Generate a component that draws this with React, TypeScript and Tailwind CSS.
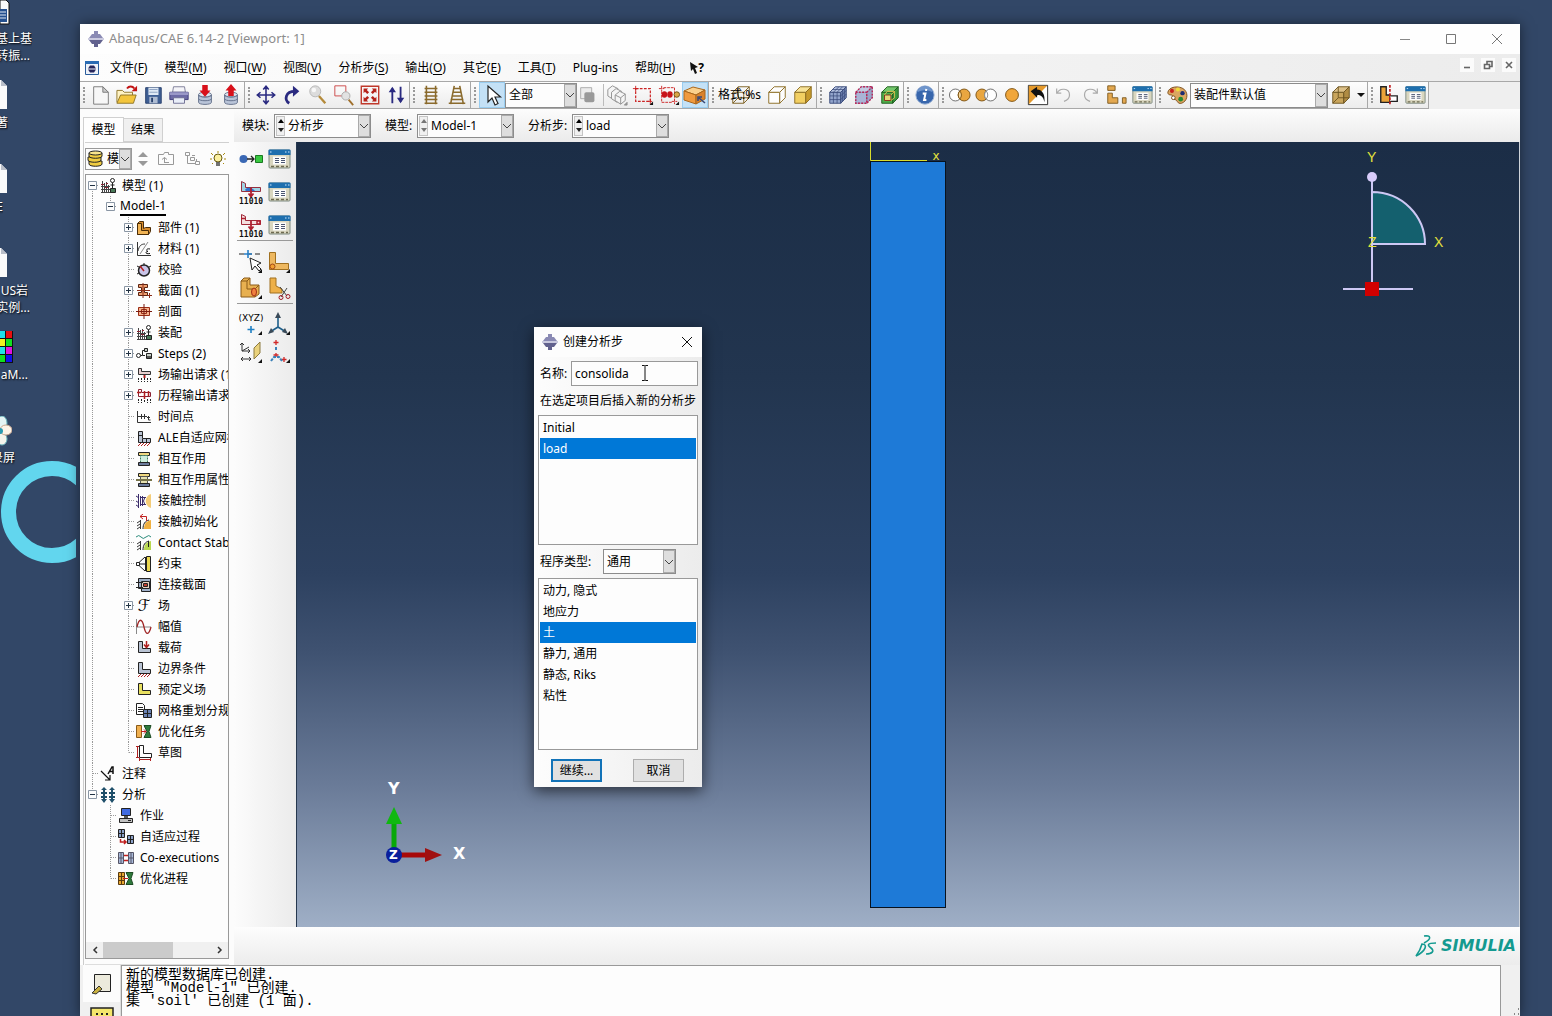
import React, { useState } from "react";

type Kids = { children?: React.ReactNode };

const Ico = ({ children, size = "size-6", box = "0 0 24 24" }: Kids & { size?: string; box?: string }) => (
  <svg viewBox={box} className={`${size} shrink-0`} fill="none" aria-hidden="true">
    {children}
  </svg>
);

const Corner = () => <path d="M23 19v4h-4z" fill="#111" />;

const Manager = () => (
  <>
    <rect x="2" y="3" width="21" height="18" rx="1" fill="#d9d6bf" stroke="#7d8a80" />
    <path d="M1.500 3.500q0-1 1-1h20q1 0 1 1V8h-22z" fill="#1e6fae" />
    <path d="M3 5h1.500M18 5h1.500M21 5h1.500" stroke="#cfe8ff" />
    <rect x="6" y="9.500" width="13" height="8" fill="#fdfdfd" />
    <path d="M8 11.500h4M8 13.500h4M8 15.500h4M14 11.500h4M14 13.500h4M14 15.500h4" stroke="#4a5570" />
    <path d="M4 19.500h3M9 19.500h3M14 19.500h3M19 19.500h2" stroke="#6d6a50" strokeWidth="1.500" />
  </>
);

const Db = () => (
  <>
    <path d="M5 12v8c0 3 14 3 14 0v-8z" fill="#b9c4d8" stroke="#5f6c88" />
    <path d="M5 12c0 3 14 3 14 0M5 16c0 3 14 3 14 0" stroke="#5f6c88" />
    <ellipse cx="12" cy="11.500" rx="7" ry="2.500" fill="#dfe6f0" stroke="#5f6c88" />
  </>
);

const Cube = ({ f, t, s, c }: { f: string; t: string; s: string; c: string }) => (
  <>
    <path d="M3 9h12v12H3z" fill={f} stroke={c} />
    <path d="M3 9l6-6h12l-6 6z" fill={t} stroke={c} />
    <path d="M15 9l6-6v12l-6 6z" fill={s} stroke={c} />
  </>
);

const tools: Record<string, React.ReactNode> = {
  new: (
    <>
      <path d="M4 3h10l6 6v13H4z" fill="#f7f7f7" stroke="#777" />
      <path d="M14 3v6h6z" fill="#ccc" stroke="#777" />
    </>
  ),
  open: (
    <>
      <path d="M1 20V7h6l2 2h9v4" fill="#fff3c4" stroke="#8c7326" />
      <path d="M1 21l4-9h17l-3 9z" fill="#f3c53c" stroke="#8c7326" />
      <path d="M12 5c2-3 6-3 8 0" stroke="#c21414" strokeWidth="2" />
      <path d="M23 2v6h-6z" fill="#c21414" />
    </>
  ),
  save: (
    <>
      <path d="M4 4h17v17H4z" fill="#3f5f94" stroke="#27406c" />
      <path d="M7 4h11v8H7z" fill="#dfe9f5" />
      <path d="M8 6h9M8 9h9" stroke="#8aa0c0" />
      <path d="M8 14h9v7H8z" fill="#aebcd2" />
      <path d="M10 15h2v5h-2z" fill="#27406c" />
    </>
  ),
  print: (
    <>
      <path d="M6 3h12l1 6H5z" fill="#f4f4f8" stroke="#7a7a96" />
      <path d="M2 9h20v8H2z" fill="#6d6aa6" stroke="#3e3b78" />
      <path d="M2 9h20v3H2z" fill="#9a98c8" />
      <path d="M6 15h12v6H6z" fill="#e9eef8" stroke="#6a6a90" />
    </>
  ),
  dbin: (
    <>
      <Db />
      <path d="M9 1h6v6h3l-6 7-6-7h3z" fill="#d8101a" />
    </>
  ),
  dbout: (
    <>
      <Db />
      <path d="M9 13h6V7h3l-6-7-6 7h3z" fill="#d8101a" />
    </>
  ),
  pan: (
    <path
      d="M12 3v18M3 12h18M9 6l3-3.500L15 6M9 18l3 3.500 3-3.500M6 9l-3.500 3L6 15M18 9l3.500 3-3.500 3"
      stroke="#2a2a80"
      strokeWidth="1.700"
    />
  ),
  rotate: (
    <>
      <path d="M9 21C3 17 5 8 15 8" stroke="#2a2a80" strokeWidth="3" />
      <path d="M13 2l7 6-7 6z" fill="#2a2a80" />
    </>
  ),
  zoom: (
    <>
      <path d="M13 13l7 8" stroke="#b48a3a" strokeWidth="2.500" />
      <circle cx="9" cy="8" r="6" fill="#dcdcdc" stroke="#b5b5b5" />
      <circle cx="7.500" cy="6.500" r="2.500" fill="#f8f8f8" />
    </>
  ),
  boxzoom: (
    <>
      <path d="M2 2h12v11H2z" stroke="#cc4444" />
      <path d="M17 17l5 6" stroke="#a0702c" strokeWidth="2" />
      <circle cx="14" cy="13" r="4.500" fill="#e2e2e2" stroke="#a9a9a9" />
    </>
  ),
  fit: (
    <>
      <path d="M2.500 2.500h19v19h-19z" stroke="#c0392b" strokeWidth="1.500" />
      <path
        d="M5 5h5L8.500 6.500l2.500 2.500-2 2-2.500-2.500L5 10zM19 5v5l-1.500-1.500L15 11l-2-2 2.500-2.500L14 5zM5 19v-5l1.500 1.500L9 13l2 2-2.500 2.500L10 19zM19 19h-5l1.500-1.500L13 15l2-2 2.500 2.500L19 14z"
        fill="#b5221a"
      />
    </>
  ),
  updown: (
    <>
      <path d="M8 21V5M17 3v16" stroke="#2a2a80" strokeWidth="2" />
      <path d="M4 9l4-6 4 6zM13 15l4 6 4-6z" fill="#2a2a80" />
    </>
  ),
  ladder: (
    <path d="M7 2v20M17 2v20M5 5h14M5 9h14M5 13h14M5 17h14M5 21h14" stroke="#8a6a2c" strokeWidth="1.700" />
  ),
  persp: <path d="M9 2L5 22M15 2l4 20M8 5h8M7 9h10M6 13h12M5 17h14M3 21h18" stroke="#8a6a2c" strokeWidth="1.700" />,
  cursor: (
    <path d="M8 3v16l4-4 3 7 3-1.500-3-6.500h5.500z" fill="#fff" stroke="#222" strokeWidth="1.200" />
  ),
  overlap: (
    <>
      <path d="M4 4h12v12H4z" fill="#ececec" stroke="#aaa" />
      <rect x="8" y="9" width="11" height="11" rx="2" fill="#999" />
    </>
  ),
  boxes: (
    <g stroke="#8e8e8e" fill="#f5f5f5">
      <path d="M2 6l5-4 6 3v8l-5 4-6-4z" />
      <path d="M6 9l5-4 6 3v8l-5 4-6-4z" />
      <path d="M10 12l5-4 6 3v7l-5 4-6-4z" />
      <path d="M10 12l6 3 5-4M16 15v7" />
      <path d="M23 20v3h-3z" fill="#999" />
    </g>
  ),
  selrect: (
    <>
      <path d="M4 5h16v14H4z" stroke="#c22" strokeDasharray="3 1.500" strokeWidth="1.300" />
      <path d="M1 5h6M4 2v6M17 19h5M20 16v6" stroke="#c22" />
      <Corner />
    </>
  ),
  nodes: (
    <>
      <path d="M1 5h6M4 2v6M15 19h6M18 16v6M6 4h12M4 8v12M4 20h12M18 4v12" stroke="#c22" strokeDasharray="3 1" />
      <ellipse cx="7" cy="11.500" rx="3" ry="3.500" fill="#c8141a" />
      <ellipse cx="13" cy="11.500" rx="3" ry="3.500" fill="#c8141a" />
      <circle cx="20.500" cy="11.500" r="3" fill="#d9a648" stroke="#6b4c12" />
      <Corner />
    </>
  ),
  solidsel: (
    <>
      <path d="M1 8l9-4 12 3-9 5z" fill="#fbd08c" stroke="#a8661c" />
      <path d="M1 8l12 4v9L1 17z" fill="#f09a3e" stroke="#a8661c" />
      <path d="M13 12l9-5v9l-9 5z" fill="#d9822c" stroke="#a8661c" />
      <path d="M22 20l-6-5M15 18v-4h4" stroke="#3a4a78" strokeWidth="1.600" />
    </>
  ),
  wire: <path d="M3 9h12v12H3zM9 3h12v12H9zM3 9l6-6M15 9l6-6M15 21l6-6M3 21l6-6" stroke="#7a5c1c" />,
  hidden: <Cube f="#fdfdfd" t="#fdfdfd" s="#fdfdfd" c="#8a6a20" />,
  shaded: <Cube f="#f2cf62" t="#f8e398" s="#c79a2c" c="#8a6a20" />,
  mesh: (
    <>
      <Cube f="#93a5cc" t="#b3c1df" s="#7386b4" c="#3a4a7a" />
      <path
        d="M7 9v12M11 9v12M3 13h12l6-6M3 17h12l6-6M7 9l6-6M11 9l6-6M17 7v12M19 5v12M6 6h12"
        stroke="#3a4a7a"
        strokeWidth=".8"
      />
    </>
  ),
  mesh2: (
    <>
      <Cube f="#a9b4d6" t="#c3cae2" s="#98a3c8" c="#8c93b4" />
      <path d="M3 9h12v12H3zM3 9l6-6h12v12l-6 6M15 9l6-6" stroke="#bb2255" strokeWidth="1.500" strokeDasharray="2 1.500" />
    </>
  ),
  mesh3: (
    <>
      <Cube f="#4fae4a" t="#74c86c" s="#3a963c" c="#1d5c1d" />
      <path d="M6 12h7v6H6z" fill="#e4d878" stroke="#8a2c1c" />
      <path d="M6 12l3-4h8v7l-4 3M13 12l4-4" stroke="#e0c050" />
    </>
  ),
  info: (
    <>
      <circle cx="12" cy="12" r="10" fill="#3866ac" stroke="#a3b8d8" />
      <path d="M3.500 9C6 0 18 0 20.500 9c-5-3-12-3-17 0z" fill="#6f95cc" />
      <path d="M13.500 5.500l-.5 2M9.500 10.500h3L11 17.500h2.500" stroke="#fff" strokeWidth="2.200" />
    </>
  ),
  circ1: (
    <>
      <circle cx="7" cy="12" r="6.500" fill="#fff" stroke="#666" />
      <circle cx="16.500" cy="12" r="6.500" fill="#e9a640" stroke="#7a5010" />
      <path d="M11.800 7.500q3.500 4.500 0 9-3.500-4.500 0-9z" fill="#fbd99a" stroke="#7a5010" />
    </>
  ),
  circ2: (
    <>
      <circle cx="7.500" cy="12" r="6.500" fill="#e9a640" stroke="#7a5010" />
      <circle cx="17" cy="12" r="6.500" fill="#fff" stroke="#666" />
      <path d="M12.200 7.500q3.500 4.500 0 9-3.500-4.500 0-9z" fill="#fff" stroke="#888" />
    </>
  ),
  circ3: <circle cx="12" cy="12" r="7" fill="#f0a63a" stroke="#7a5010" />,
  swap: (
    <>
      <path d="M1.500 1.500h21v21h-21z" fill="#fff" stroke="#222" />
      <path d="M2 2h20L2 22z" fill="#e59a2c" />
      <path d="M4 8l7-5v3c6 0 9 6 8 14-1-6-4-8-8-8v3z" fill="#111" />
    </>
  ),
  undo: <path d="M4 5v5h5M4.500 10C7 4 18 4 18 12c0 4-3 6-6 7" stroke="#aaa" strokeWidth="1.300" />,
  redo: <path d="M20 5v5h-5M19.500 10C17 4 6 4 6 12c0 4 3 6 6 7" stroke="#aaa" strokeWidth="1.300" />,
  parts: (
    <g fill="#e3a850" stroke="#7d5a20">
      <path d="M3 2h8v5H3zM3 10h5v5h6v6H3zM19 15h4v6h-4z" />
    </g>
  ),
  manager: <Manager />,
  palette: (
    <>
      <path d="M2 9C3 3 14 1 20 6c5 5 3 13-3 15-5 1-4-3-7-4-4 0-1-4-4-5-3 0-4-1-4-3z" fill="#dba660" stroke="#7a4c18" />
      <circle cx="6.500" cy="7.500" r="2.200" fill="#c8201c" />
      <circle cx="13" cy="6" r="2.200" fill="#f2dc3a" />
      <circle cx="18" cy="10" r="2.400" fill="#1c2c72" />
      <circle cx="16" cy="16.500" r="2.600" fill="#268a30" />
      <circle cx="8" cy="15" r="2" fill="#fff" stroke="#7a4c18" />
    </>
  ),
  tan: (
    <>
      <Cube f="#c9a55c" t="#dcc088" s="#b08c44" c="#6c5420" />
      <path d="M9 3v12h12M9 15l-6 6" stroke="#6c5420" />
    </>
  ),
  section: (
    <>
      <path d="M3 3h6v9h4v8H3z" fill="#eba33a" stroke="#222" strokeWidth="1.500" />
      <path d="M13 13h8v6h-8" fill="#fff" stroke="#222" strokeWidth="1.500" />
      <path d="M13 1v22" stroke="#c0181c" strokeWidth="1.800" strokeDasharray="3 1.500" />
    </>
  ),
};

const LShape = ({ f = "#b9c3d3" }: { f?: string }) => <path d="M2.500 1.500h4v7h8v4h-12z" fill={f} stroke="#222" />;
const Hatch = () => <path d="M2 16l3-3M5 16l3-3M8 16l3-3M11 16l3-3" stroke="#b02020" />;
const Assembly = () => (
  <>
    <path d="M2.500 3v12M4.500 5v10M6.500 4v11M8.500 7v8M1 8.500h9M1 11.500h10M1 14.500h14" stroke="#444" />
    <path d="M1 6.500h3M6 5.500h2M5 9.500h3" stroke="#8c2233" />
    <circle cx="12.500" cy="2.500" r="2" fill="#fff" stroke="#222" />
    <path d="M12.500 4.500V10M10.500 7h4" stroke="#222" />
    <path d="M10.500 10.500h5v4h-5z" fill="#4a7a58" stroke="#222" />
  </>
);

const nodeIcons: Record<string, React.ReactNode> = {
  assembly: <Assembly />,
  part: (
    <>
      <path d="M1.500 3.500l2-2h4v7l2-1h5v4l-2 3h-11z" fill="#d98c2c" stroke="#4a2c08" />
      <path d="M1.500 3.500h4v7h7v4h-11z" fill="#f0b354" stroke="#4a2c08" />
    </>
  ),
  material: (
    <>
      <path d="M1.500 1v13.500H15M2 10c1-5 3-7 7-7" stroke="#333" />
      <path d="M4 13L12 1" stroke="#888" />
      <path d="M14 8c-4-1-4 2-2 2.500-3 0-3 3 2 2" stroke="#111" />
    </>
  ),
  dial: (
    <>
      <circle cx="8" cy="8.500" r="5.500" fill="#c9c4e8" stroke="#222" strokeWidth="1.500" />
      <path d="M8 9L4 4" stroke="#b02020" strokeWidth="1.500" />
      <path d="M8 1v2M1 4l2 1M15 4l-2 1M1 12l2-1" stroke="#222" />
    </>
  ),
  beam: (
    <>
      <path d="M2.500 1.500h9v3h-3v5h3v3h-9v-3h3v-5h-3z" fill="#f0a070" stroke="#5a2210" />
      <path d="M7 0v15M1 7.500h13M13.500 10v5M11 12.500h5" stroke="#8a2c1a" />
    </>
  ),
  profile: (
    <>
      <path d="M2.500 3.500h11v8h-11z" fill="#f6b490" stroke="#9a2c14" />
      <path d="M5.500 5.500h5v4h-5z" stroke="#9a2c14" />
      <path d="M8 0v15M0 7.500h16" stroke="#7a1c10" />
    </>
  ),
  steps: (
    <>
      <circle cx="2.500" cy="9.500" r="2" fill="#fff" stroke="#222" />
      <path d="M4.500 9.500h2v-5h2M9 9.500H7" stroke="#222" />
      <path d="M8.500 2.500h3v3h-3zM10.500 7.500h5v5h-5z" fill="#c8d0c8" stroke="#222" />
      <path d="M11 10h4v2h-4z" fill="#555" />
    </>
  ),
  field: (
    <>
      <path d="M2.500 1.500h3v3h9v3h-12z" fill="#e8d0d0" stroke="#333" />
      <path d="M8.500 8v3" stroke="#b02020" strokeWidth="2" />
      <path d="M2.500 11v4M5.500 11v4M8.500 11v4M11.500 11v4M14.500 11v4" stroke="#222" strokeDasharray="2 1" />
    </>
  ),
  history: (
    <>
      <path d="M2.500 1.500h3v3h9v4h-12z" fill="#fff" stroke="#8c2233" />
      <path d="M8.500 3v8M12.500 3v5M1 4.500h4" stroke="#b02020" strokeWidth="1.500" />
      <path d="M2.500 11v4M5.500 11v4M8.500 12v3M11.500 11v4M14.500 11v4" stroke="#222" strokeDasharray="2 1" />
    </>
  ),
  time: (
    <>
      <path d="M1.500 2v11.500H15M2 7.500h9M5.500 5v5M8.500 5v5" stroke="#333" />
      <path d="M12.500 7v4h2M11 8.500h3" stroke="#333" />
    </>
  ),
  ale: (
    <>
      <LShape />
      <path d="M3 5.500h4M6.500 9v4M10.500 9v4" stroke="#222" />
      <Hatch />
    </>
  ),
  inter: (
    <>
      <path d="M2.500 1.500h11v3h-11z" fill="#f0d880" stroke="#222" />
      <path d="M4.500 4.500h7v7h-7z" fill="#cdeedd" stroke="#3a7a5a" strokeDasharray="2 1" />
      <path d="M2.500 11.500h11v3h-11z" fill="#6a7a9a" stroke="#222" />
    </>
  ),
  interprop: (
    <>
      <path d="M2.500 1.500h11v3h-11z" fill="#f0d880" stroke="#222" />
      <path d="M4.500 4.500h7v7h-7z" fill="#e6e2b0" stroke="#555" />
      <path d="M0 8h16" stroke="#77744a" strokeWidth="2" />
      <path d="M2.500 11.500h11v3h-11z" fill="#6a7a9a" stroke="#222" />
    </>
  ),
  ctrl: (
    <>
      <path d="M2.500 1v14M4.500 3v10M0 3l3 2M0 8l3 2M0 12l3 2M6.500 3v10M4 4.500h6M4 11.500h6" stroke="#3a2c6a" />
      <path d="M15 1v14c-7-2-7-12 0-14z" fill="#f4cc78" />
      <path d="M9 4q-3 4 0 8" stroke="#3a2c6a" />
    </>
  ),
  init: (
    <>
      <path d="M4.500 6v9M1 9l3-2M1 12l3-2M1 15l3-2" stroke="#333" />
      <path d="M15 6v9H8c0-5 2-8 7-9z" fill="#f0b040" />
      <path d="M7 15c0-5 2-8 6-9" stroke="#222" />
      <path d="M4 2.500h6.500V7M7 0L4 2.500 7 5" stroke="#c02020" />
    </>
  ),
  stab: (
    <>
      <path d="M0 2q3-3 5 0t5 0 5 0" stroke="#2a8a7a" />
      <path d="M4.500 6v9M1 9l3-2M1 12l3-2M1 15l3-2" stroke="#333" />
      <path d="M15 6v9H8c0-5 2-8 7-9z" fill="#b8d850" />
      <path d="M7 15c0-5 2-8 6-9M12.500 6v6" stroke="#222" />
    </>
  ),
  constraint: (
    <>
      <path d="M.5 6.500h3v3h-3zM3 6.500L9 1M3 9.500L9 15M4 8h5" stroke="#222" />
      <path d="M10.500.500h4v15h-4z" fill="#ecd850" stroke="#222" />
      <path d="M9.500 1v14" stroke="#222" />
    </>
  ),
  conn: (
    <>
      <path d="M2.500 1.500h12v13h-9v-3h-3z" fill="#9fafc8" stroke="#222" />
      <path d="M5.500 4.500h8v7h-8z" fill="#e9d0c0" stroke="#222" />
      <path d="M7.500 6.500h4v3h-4z" fill="#c03a2a" stroke="#222" />
      <path d="M0 5.500h7M0 10.500h7" stroke="#222" />
    </>
  ),
  amp: (
    <>
      <path d="M.5 0v15M0 8h15" stroke="#888" />
      <path d="M1 8C3-1 6-1 8 8s5 8 7 0" stroke="#a02828" strokeWidth="1.300" />
    </>
  ),
  load: (
    <>
      <LShape />
      <path d="M10.500 1v6M8 4.500l2.500 3 2.500-3" stroke="#b02020" strokeWidth="1.500" />
    </>
  ),
  bc: (
    <>
      <LShape />
      <Hatch />
    </>
  ),
  predef: <LShape f="#e8e060" />,
  remesh: (
    <>
      <path d="M.5.500h6l2 2v9h-8z" fill="#fff" stroke="#222" />
      <path d="M2 4.500h5M2 6.500h5M2 8.500h5" stroke="#222" />
      <path d="M7.500 6.500h8v8h-8z" fill="#6a82b4" stroke="#222" />
      <path d="M7 10.500h8M11.500 7v8" stroke="#222" />
    </>
  ),
  opt: (
    <>
      <path d="M.5 1.500h5v12h-5z" fill="#f0b050" stroke="#8a5a18" />
      <path d="M8 1.500h7l-2 6 2 6H8l3-6z" fill="#2f7a3c" stroke="#1d4c24" />
      <path d="M5 7.500h5M8 5.500l2 2-2 2" stroke="#c02020" />
    </>
  ),
  sketch: (
    <>
      <path d="M3.500.500h4v8h8v4h-12z" fill="#fff" stroke="#222" />
      <path d="M1.500 1v12M0 1.500h3M0 12.500h3M3 14.500h12M3.500 13v3M14.500 13v3" stroke="#b02020" />
    </>
  ),
  note: (
    <>
      <path d="M1 5l9 9M10 9v5H5" stroke="#111" strokeWidth="1.200" />
      <path d="M8 8l4-7h1v7M9 5.500h4" stroke="#111" strokeWidth="1.500" />
    </>
  ),
  analysis: (
    <g fill="#1f4f6a">
      <path d="M4 0l3 3H5v2h2v2H5v2h2v2H5v1h2l-3 4-3-4h2v-1H1V9h2V7H1V5h2V3H1z" />
      <path d="M12 0l3 3h-2v2h2v2h-2v2h2v2h-2v1h2l-3 4-3-4h2v-1H9V9h2V7H9V5h2V3H9z" />
    </g>
  ),
  job: (
    <>
      <path d="M3.500.500h9v7h-9z" fill="#3f6ae0" stroke="#222" />
      <path d="M6 8h4v3H6z" fill="#555" />
      <path d="M1.500 10.500h13v4h-13z" fill="#c0c0c0" stroke="#222" />
      <path d="M10 12.500h3" stroke="#222" />
    </>
  ),
  adapt: (
    <>
      <path d="M.5.500h6v8h-6zM9.500 6.500h6v8h-6z" fill="#8aa0c8" stroke="#222" />
      <path d="M0 4.500h6M3.500 1v8M9 10.500h6M12.500 7v8" stroke="#222" />
      <path d="M2.500 10v3H8M6 11l2 2-2 2" stroke="#c02020" strokeWidth="1.500" />
    </>
  ),
  coexec: (
    <>
      <path d="M.5 2.500h5v11h-5zM10.500 2.500h5v11h-5z" fill="#a8b8d8" stroke="#556" />
      <path d="M0 8h6M10 8h6M3 2v11M13 2v11" stroke="#556" />
      <path d="M6 5.500h4M6 10.500h4" stroke="#c02020" strokeWidth="1.500" />
    </>
  ),
  optproc: (
    <>
      <path d="M.5 1.500h6v12h-6z" fill="#e8a830" stroke="#5a3a10" />
      <path d="M1 5.500h6M1 9.500h6M3.500 2v12" stroke="#5a3a10" />
      <path d="M8 1.500h7l-2 6 2 6H8l3-6z" fill="#2f7a3c" stroke="#1d4c24" />
      <path d="M5 7.500h5" stroke="#c02020" />
    </>
  ),
};

const AbaqusMark = () => (
  <Ico size="size-4" box="0 0 16 16">
    <path d="M6 0h4v3h2l3 4H1l3-4h2z" fill="#8a8ab4" />
    <path d="M1 9h14l-3 4h-2v3H6v-3H4z" fill="#62628e" />
    <path d="M0 8h16" stroke="#b9b9d4" strokeWidth="1.500" />
  </Ico>
);

const Chevron = () => (
  <svg viewBox="0 0 10 6" className="h-[6px] w-[10px] shrink-0" fill="none" aria-hidden="true">
    <path d="M1 1l4 4 4-4" stroke="#444" />
  </svg>
);

const Spinner = ({ muted = false }: { muted?: boolean }) => (
  <div className="my-px ml-px flex w-[9px] flex-col items-center justify-around border border-[#c4c4c4] bg-[#f0f0f0]">
    <svg viewBox="0 0 6 4" className="h-1 w-[6px]" aria-hidden="true">
      <path d="M0 4l3-4 3 4z" fill={muted ? "#777" : "#000"} />
    </svg>
    <svg viewBox="0 0 6 4" className="h-1 w-[6px]" aria-hidden="true">
      <path d="M0 0l3 4 3-4z" fill={muted ? "#777" : "#222"} />
    </svg>
  </div>
);

const Combo = ({ value, label, className, spin, muted }: { value: string; label: string; className: string; spin?: boolean; muted?: boolean }) => (
  <div className={`relative flex shrink-0 border border-[#8c8c8c] bg-[#fdfdfd] ${className}`}>
    {spin && <Spinner muted={muted} />}
    <select aria-label={label} className="min-w-0 flex-1 appearance-none bg-transparent pr-3 pl-[3px] outline-none">
      <option>{value}</option>
    </select>
    <span className="pointer-events-none absolute inset-y-0 right-0 flex w-3 items-center justify-center border border-[#aaa] bg-[#dedede]">
      <Chevron />
    </span>
  </div>
);

const menus: [string, string][] = [
  ["文件", "F"], ["模型", "M"], ["视口", "W"], ["视图", "V"], ["分析步", "S"],
  ["输出", "O"], ["其它", "E"], ["工具", "T"], ["Plug-ins", ""], ["帮助", "H"],
];

const Group = ({ children }: Kids) => (
  <div className="flex h-full shrink-0 items-center border-r border-[#a8a8a8]">
    <span className="flex w-2 justify-center">
      <span className="h-4 border-l-2 border-dotted border-[#999]" />
    </span>
    {children}
  </div>
);

const Tool = ({ name, on }: { name: string; on?: boolean }) => (
  <button
    aria-label={name}
    className={`flex h-[26px] w-[26px] shrink-0 items-center justify-center ${on ? "border border-[#99cdf0] bg-[#c4e1f6]" : ""}`}
  >
    <Ico size={on ? "size-6" : "size-[22px]"}>{tools[name]}</Ico>
  </button>
);

const Toolset = ({ names }: { names: string[] }) => <>{names.map((n) => <Tool key={n} name={n} />)}</>;

type Guide = "line" | "tee" | "end" | "blank" | "plus" | "minus" | "minusEnd" | "minusTop";
type Row = { guides: Guide[]; icon?: string; text: string; current?: boolean };

const GuideCell = ({ kind, last }: { kind: Guide; last: boolean }) => {
  const up = kind !== "blank" && kind !== "minusTop";
  const down = kind === "line" || kind === "tee" || kind === "plus" || kind === "minusTop";
  const box = kind === "plus" || kind.startsWith("minus");
  const body = (
    <svg viewBox="0 0 14 21" className="h-[21px] w-[14px]" fill="none" aria-hidden="true">
      <g stroke="#999" strokeDasharray="1 1">
        {up && <path d="M6.500 0v10.500" />}
        {down && <path d="M6.500 10v11" />}
        {kind !== "blank" && kind !== "line" && <path d="M7 10.500h6" />}
      </g>
      {box && (
        <>
          <path d="M2.500 6.500h8v8h-8z" fill="#fdfdfd" stroke="#8a96a4" />
          <path d="M4 10.500h5" stroke="#234" />
          {kind === "plus" && <path d="M6.500 8v5" stroke="#234" />}
        </>
      )}
    </svg>
  );
  const gap = last ? "shrink-0" : "mr-1 shrink-0";
  return box ? (
    <button aria-label={kind === "plus" ? "展开" : "折叠"} className={gap}>{body}</button>
  ) : (
    <span className={gap}>{body}</span>
  );
};

const sub = (icon: string, text: string, g: Guide = "tee"): Row => ({ guides: ["line", "blank", g], icon, text });

const rows: Row[] = [
  { guides: ["minusTop"], icon: "assembly", text: "模型 (1)" },
  { guides: ["line", "minusEnd"], text: "Model-1", current: true },
  sub("part", "部件 (1)", "plus"),
  sub("material", "材料 (1)", "plus"),
  sub("dial", "校验"),
  sub("beam", "截面 (1)", "plus"),
  sub("profile", "剖面"),
  sub("assembly", "装配", "plus"),
  sub("steps", "Steps (2)", "plus"),
  sub("field", "场输出请求 (1)", "plus"),
  sub("history", "历程输出请求 (1)", "plus"),
  sub("time", "时间点"),
  sub("ale", "ALE自适应网格约束"),
  sub("inter", "相互作用"),
  sub("interprop", "相互作用属性"),
  sub("ctrl", "接触控制"),
  sub("init", "接触初始化"),
  sub("stab", "Contact Stabilizations"),
  sub("constraint", "约束"),
  sub("conn", "连接截面"),
  sub("script", "场", "plus"),
  sub("amp", "幅值"),
  sub("load", "载荷"),
  sub("bc", "边界条件"),
  sub("predef", "预定义场"),
  sub("remesh", "网格重划分规则"),
  sub("opt", "优化任务"),
  sub("sketch", "草图", "end"),
  { guides: ["tee"], icon: "note", text: "注释" },
  { guides: ["minusEnd"], icon: "analysis", text: "分析" },
  { guides: ["blank", "tee"], icon: "job", text: "作业" },
  { guides: ["blank", "tee"], icon: "adapt", text: "自适应过程" },
  { guides: ["blank", "tee"], icon: "coexec", text: "Co-executions" },
  { guides: ["blank", "end"], icon: "optproc", text: "优化进程" },
];

const ModelTree = () => (
  <div className="flex min-h-0 flex-1 flex-col border border-[#999] bg-[#fdfdfd]">
    <ul className="min-h-0 flex-1 overflow-hidden">
      {rows.map((r) => (
        <li key={r.text} className="flex h-[21px] items-center whitespace-nowrap">
          {r.guides.map((g, i) => (
            <GuideCell key={i} kind={g} last={i === r.guides.length - 1} />
          ))}
          {r.icon === "script" && (
            <span className="mr-[6px] w-4 shrink-0 text-center font-['DejaVu_Sans'] text-base leading-5">ℱ</span>
          )}
          {r.icon && r.icon !== "script" && (
            <span className="mr-[6px] shrink-0">
              <Ico size="size-4" box="0 0 16 16">{nodeIcons[r.icon]}</Ico>
            </span>
          )}
          <span className={r.current ? "ml-0.5 border-b-2 border-black leading-4" : ""}>{r.text}</span>
        </li>
      ))}
    </ul>
    <div className="flex h-4 items-center bg-[#f0f0f0]">
      <button aria-label="向左滚动" className="flex h-full w-[17px] items-center justify-center">
        <svg viewBox="0 0 6 8" className="h-2 w-[6px]" fill="none"><path d="M5 1L2 4l3 3" stroke="#333" strokeWidth="1.500" /></svg>
      </button>
      <div className="flex h-full flex-1"><span className="h-full w-[65%] bg-[#cbcbcb]" /></div>
      <button aria-label="向右滚动" className="flex h-full w-[17px] items-center justify-center">
        <svg viewBox="0 0 6 8" className="h-2 w-[6px]" fill="none"><path d="M1 1l3 3-3 3" stroke="#333" strokeWidth="1.500" /></svg>
      </button>
    </div>
  </div>
);

const Field = ({ red }: { red?: boolean }) => (
  <>
    <path d="M2.500 1.500l4 2v4h15v4h-19z" fill={red ? "#f4dede" : "#9fd4e4"} stroke={red ? "#a02838" : "#963040"} />
    {!red && <path d="M6 10c2-4 8-2 10 1H7z" fill="#2f6fcc" />}
    <path d="M12 8v8M9.500 13.500l2.500 3 2.500-3" stroke="#b02030" strokeWidth="1.800" />
    {red && <path d="M2 5.500h4M18 8h3v3h-3z" stroke="#b02030" strokeWidth="1.500" />}
    <text x="0" y="24" fill="#111" fontFamily="DejaVu Sans Mono" fontWeight="bold" fontSize="8">11010</text>
  </>
);

const toolbox: React.ReactNode[][] = [
  [
    <><circle cx="4.500" cy="12" r="4" fill="#3a68b4" /><path d="M8 12h7M12 9l3 3-3 3" stroke="#222" strokeWidth="1.300" /><path d="M16.500 8.500h7v7h-7z" fill="#38c840" stroke="#1a7a22" /></>,
    <Manager />,
    <Field />,
    <Manager />,
    <Field red />,
    <Manager />,
  ],
  [
    <><path d="M0 4h23" stroke="#222" strokeDasharray="5 3" /><path d="M9 0v8M5 4h8" stroke="#2a80c8" strokeWidth="1.600" /><path d="M11 8l2 12 3-4 4 5 2-2-4-4 4-2z" fill="#fff" stroke="#222" /><Corner /></>,
    <><path d="M2.500 2.500h6v11h13v6h-19z" fill="#eeb860" stroke="#a07020" /><circle cx="5.500" cy="16.500" r="2.500" fill="#f2a030" stroke="#a04818" /><Corner /></>,
    <><path d="M2 5l3-3h6v7h9v9l-4 3H2z" fill="#e8b050" stroke="#8a5a18" /><path d="M2 5h6v8h8v8M8 5l3-3M16 13l4-4" stroke="#8a5a18" /><ellipse cx="15" cy="16" rx="2.500" ry="4" fill="#f08040" stroke="#a03018" /><Corner /></>,
    <><path d="M3 2h6v8l6 3v4H3z" fill="#eeb048" stroke="#a07020" /><path d="M13 11l7 9M20 12l-6 9" stroke="#444" /><circle cx="14" cy="21.500" r="2" stroke="#a01c28" /><circle cx="21" cy="20.500" r="2" stroke="#a01c28" /></>,
  ],
  [
    <><path d="M12 14v7M8.500 17.500h7" stroke="#1f7fc4" strokeWidth="1.600" /><Corner /></>,
    <><path d="M11 3v12M11 15l-8 5M11 15l8 5" stroke="#1f5f8a" strokeWidth="1.600" /><path d="M11 0l3 6H8zM1 22l3-6 3 4zM21 22l-6-2 3-4z" fill="#3a4a58" /><Corner /></>,
    <><path d="M3 11V3M3 11h8M3 11l7-4M2 19h10M4 17l-2 2 2 2M10 17l2 2-2 2M1 5l2-2 2 2M9 9l2 2-2 2" stroke="#333" /><path d="M15 8l6-6v11l-6 6z" fill="#ead27c" stroke="#8c7a40" /><Corner /></>,
    <><path d="M9 0v5M6.500 2.500h5M9 13v4M6.500 15h5M17 17v5M14.500 19.500h5" stroke="#d02828" strokeWidth="1.300" /><path d="M9 7v4M4 21l3-4 5 0 3 4" stroke="#3a80b8" strokeWidth="2" strokeDasharray="3 1" /><Corner /></>,
  ],
];

const toolboxSpacing = [
  "gap-y-[9px] border-b border-[#999] pt-[5px] pb-[3px]",
  "gap-y-[2px] border-b border-[#999] pt-[9px] pb-[3px]",
  "gap-y-1 pt-2",
];

const Toolbox = () => (
  <aside className="flex w-[62px] shrink-0 flex-col bg-linear-to-r from-[#fcfcfc] to-[#ebebeb]">
    {toolbox.map((set, i) => (
      <div key={i} className={`mx-[3px] grid grid-cols-2 ${toolboxSpacing[i]}`}>
        {set.map((node, j) => (
          <button key={j} aria-label={`工具 ${i + 1}-${j + 1}`} className="relative flex h-6 items-center justify-center">
            <Ico size="size-6">{node}</Ico>
            {i === 2 && j === 0 && (
              <span className="absolute inset-x-0 top-0 text-center font-['DejaVu_Sans'] text-[9px] leading-3">(XYZ)</span>
            )}
          </button>
        ))}
      </div>
    ))}
  </aside>
);

const Viewport = () => (
  <main className="relative min-w-0 flex-1 overflow-hidden border-l border-[#26384f] bg-[linear-gradient(180deg,#1b2d46_0%,#22354f_30%,#2d4160_55%,#3f5271_65%,#6a7b98_82%,#9fafc6_100%)]">
    <div className="absolute top-[19px] bottom-[19px] left-[46.900%] w-[76px] border border-[#08121e] bg-[#1e7ad7]" />
    <svg className="absolute top-0 left-[46.900%] h-5 w-16" viewBox="0 0 64 20" fill="none" aria-hidden="true">
      <path d="M.5 0v18.500H57" stroke="#d8dc2c" />
    </svg>
    <span className="absolute top-[7px] left-[52%] font-['DejaVu_Sans'] text-xs leading-[14px] text-[#e4e23c]">x</span>
    <svg className="absolute top-2 right-[70px] h-[150px] w-28" viewBox="0 0 112 150" fill="none" aria-hidden="true">
      <path d="M35 42c30 0 53 24 53 52H35z" fill="#14606e" stroke="#cdc8f4" strokeWidth="2" />
      <path d="M35 28v110M6 139h70" stroke="#cdc8f4" strokeWidth="2" />
      <circle cx="35" cy="27" r="5" fill="#d8ccfa" />
      <path d="M28 132h14v14H28z" fill="#d00000" />
      <g fill="#e4e23c" fontFamily="Liberation Sans" fontSize="14">
        <text x="30" y="12">Y</text>
        <text x="31" y="97">Z</text>
        <text x="97" y="97">X</text>
      </g>
    </svg>
    <svg className="absolute bottom-[57px] left-[82px] h-[90px] w-24" viewBox="0 0 96 90" fill="none" aria-hidden="true">
      <path d="M15 74V34" stroke="#08a808" strokeWidth="5" />
      <path d="M7 44l8-17 8 17z" fill="#10b810" />
      <path d="M20 75h28" stroke="#a80808" strokeWidth="5" />
      <path d="M46 68l17 7-17 7z" fill="#a01010" />
      <circle cx="15" cy="75" r="8" fill="#0a1f9c" />
      <g fill="#fff" fontFamily="DejaVu Sans" fontWeight="bold" fontSize="16">
        <text x="9" y="14">Y</text>
        <text x="74" y="79">X</text>
        <text x="10" y="79" fontSize="12">Z</text>
      </g>
    </svg>
  </main>
);

const ListBox = ({ items, start, label, className }: { items: string[]; start: string; label: string; className: string }) => {
  const [sel, setSel] = useState(start);
  return (
    <div role="listbox" aria-label={label} className={`flex flex-col border border-[#999] bg-[#fdfdfd] p-px ${className}`}>
      {items.map((t) => (
        <button
          key={t}
          role="option"
          aria-selected={t === sel}
          onClick={() => setSel(t)}
          className={`h-[21px] px-[3px] text-left ${t === sel ? "bg-[#0078d7] text-white" : ""}`}
        >
          {t}
        </button>
      ))}
    </div>
  );
};

const StepDialog = () => (
  <section
    role="dialog"
    aria-label="创建分析步"
    className="absolute top-[327px] left-[534px] flex w-[168px] flex-col bg-linear-to-r from-[#fdfdfd] to-[#ececec] pb-[5px] shadow-[0_4px_14px_rgba(0,0,0,0.6)]"
  >
    <header className="flex h-[30px] items-center gap-[5px] bg-[#fdfdfd] pr-[9px] pl-2">
      <AbaqusMark />
      <h2 className="flex-1">创建分析步</h2>
      <button aria-label="关闭">
        <svg viewBox="0 0 12 12" className="size-3" fill="none"><path d="M1 1l10 10M11 1L1 11" stroke="#111" /></svg>
      </button>
    </header>
    <div className="mt-1 flex items-center pr-1 pl-[6px]">
      <label htmlFor="step-name" className="w-[31px] shrink-0 whitespace-nowrap">名称:</label>
      <input id="step-name" defaultValue="consolida" className="h-[25px] w-full min-w-0 border border-[#999] bg-[#fdfdfd] px-[3px] outline-none" />
      <svg viewBox="0 0 8 18" className="pointer-events-none absolute top-[37px] right-[53px] h-[18px] w-2" fill="none">
        <path d="M1 1.500h2.500l.5.500.5-.5H7M4 2v14M1 16.500h2.500l.5-.5.5.5H7" stroke="#111" />
      </svg>
    </div>
    <p className="my-[5px] pl-[6px] leading-[19px] whitespace-nowrap">在选定项目后插入新的分析步</p>
    <ListBox label="分析步" items={["Initial", "load"]} start="load" className="mx-1 h-[130px]" />
    <div className="my-1 flex items-center pl-[6px]">
      <span className="w-[63px] whitespace-nowrap">程序类型:</span>
      <Combo label="程序类型" value="通用" className="h-[25px] w-[73px]" />
    </div>
    <ListBox
      label="类型"
      items={["动力, 隐式", "地应力", "土", "静力, 通用", "静态, Riks", "粘性"]}
      start="土"
      className="mx-1 h-[172px]"
    />
    <footer className="mt-[9px] flex justify-between pr-[18px] pl-[17px]">
      <button className="h-[23px] w-[51px] border-2 border-[#1273b8] bg-[#e1e1e1]">继续...</button>
      <button className="h-[23px] w-[51px] border border-[#adadad] bg-[#e1e1e1]">取消</button>
    </footer>
  </section>
);

const DesktopLabel = ({ children, className }: Kids & { className: string }) => (
  <span className={`absolute left-0 flex justify-end overflow-hidden whitespace-nowrap text-white [text-shadow:1px_1px_2px_#000] ${className}`}>
    {children}
  </span>
);

const Page = ({ className }: { className: string }) => (
  <svg viewBox="0 0 7 29" className={`absolute left-0 h-[29px] w-[7px] ${className}`} aria-hidden="true">
    <path d="M0 0h1l6 6v23H0z" fill="#fafafa" />
    <path d="M1 0l6 6H1z" fill="#b9bec8" />
  </svg>
);

const Desktop = () => (
  <div className="absolute inset-y-0 left-0 w-20">
    <svg viewBox="0 0 10 25" className="absolute top-0 left-0 h-[25px] w-[10px]" fill="none" aria-hidden="true">
      <path d="M0 0h6l3 3v21H0z" fill="#fafafa" stroke="#111" />
      <path d="M0 9h7v13H0z" fill="#24508e" />
      <path d="M0 12h6M0 15h6M0 18h6" stroke="#dfe8f4" />
    </svg>
    <DesktopLabel className="top-[31px] w-8">基上基</DesktopLabel>
    <DesktopLabel className="top-[48px] w-[30px]">转振...</DesktopLabel>
    <Page className="top-20" />
    <DesktopLabel className="top-[115px] w-2">著</DesktopLabel>
    <Page className="top-[164px]" />
    <DesktopLabel className="top-[199px] w-[3px]">E</DesktopLabel>
    <Page className="top-[248px]" />
    <DesktopLabel className="top-[283px] w-7">US岩</DesktopLabel>
    <DesktopLabel className="top-[300px] w-[30px]">实例...</DesktopLabel>
    <svg viewBox="0 0 13 32" className="absolute top-[331px] left-0 h-8 w-[13px]" aria-hidden="true">
      <path d="M0 0h13v32H0z" fill="#111" />
      <path d="M0 0h5v7H0zM0 16h5v7H0z" fill="#20e0e8" />
      <path d="M6 0h6v7H6z" fill="#e81010" />
      <path d="M0 8h5v7H0z" fill="#f0f020" />
      <path d="M6 8h6v7H6zM0 24h5v7H0z" fill="#10e020" />
      <path d="M6 16h6v7H6z" fill="#e010e0" />
      <path d="M6 24h6v7H6z" fill="#1010e8" />
    </svg>
    <DesktopLabel className="top-[367px] w-7">aM...</DesktopLabel>
    <svg viewBox="0 0 12 30" className="absolute top-[416px] left-0 h-[30px] w-3" aria-hidden="true">
      <ellipse cx="2" cy="7" rx="5" ry="7" fill="#e4f4f4" stroke="#6ab4bc" />
      <ellipse cx="2" cy="23" rx="5" ry="6" fill="#f4f4ec" stroke="#6ab4bc" />
      <ellipse cx="6" cy="14" rx="6" ry="5" fill="#fdf4e8" stroke="#c8a890" />
      <circle cx="0" cy="15" r="3" fill="#2a9ab0" />
    </svg>
    <DesktopLabel className="top-[450px] w-[15px]">录屏</DesktopLabel>
    <svg viewBox="0 0 76 104" className="absolute top-[460px] left-0 h-[104px] w-[76px]" fill="none" aria-hidden="true">
      <circle cx="52" cy="52" r="43.500" stroke="#62d6ee" strokeWidth="15" />
    </svg>
  </div>
);

export default function App() {
  return (
    <div className="relative h-screen min-h-[1016px] overflow-hidden bg-[#324767] pt-6 pr-8 pl-20 font-['Noto_Sans','Noto_Sans_CJK_SC',sans-serif] text-xs text-black">
      <Desktop />
      <div className="relative flex h-full flex-col overflow-hidden bg-[#f4f4f4] shadow-[0_0_12px_rgba(0,0,0,0.5)]">
        <header className="flex h-[30px] shrink-0 items-center bg-[#fefefe] pr-[17px] pl-2 text-[#8d8d8d]">
          <AbaqusMark />
          <h1 className="ml-[5px] flex-1 text-[13px]">Abaqus/CAE 6.14-2 [Viewport: 1]</h1>
          <div className="flex items-center gap-[34px]">
            <button aria-label="最小化"><svg viewBox="0 0 12 12" className="size-3" fill="none"><path d="M1 6.500h10" stroke="#888" /></svg></button>
            <button aria-label="最大化"><svg viewBox="0 0 12 12" className="size-3" fill="none"><path d="M1.500 1.500h9v9h-9z" stroke="#777" /></svg></button>
            <button aria-label="关闭窗口"><svg viewBox="0 0 12 12" className="size-3" fill="none"><path d="M1 1l10 10M11 1L1 11" stroke="#777" /></svg></button>
          </div>
        </header>

        <nav className="flex h-[27px] shrink-0 items-center bg-linear-to-r from-[#fdfdfd] to-[#ececec] pr-1 pl-[5px]">
          <Ico size="size-[14px]" box="0 0 14 14">
            <path d="M.5.500h13v13H.5z" fill="#eef3fa" stroke="#2a5c9c" />
            <path d="M0 0h14v3H0z" fill="#2a6cb4" />
            <path d="M5 4.500h4l2 3H3zM3 8.500h8l-2 3H5z" fill="#27275c" />
          </Ico>
          <div className="ml-[3px] flex gap-px">
            {menus.map(([t, k]) => (
              <button key={t} className="px-2 leading-5 whitespace-nowrap">
                {k ? <>{t}(<u className="underline-offset-2">{k}</u>)</> : <>Plu<u className="underline-offset-2">g</u>-ins</>}
              </button>
            ))}
          </div>
          <button aria-label="上下文帮助" className="ml-[7px] flex items-center font-bold">
            <svg viewBox="0 0 8 12" className="h-3 w-2"><path d="M0 0l8 5-3 1 2 5-2 1-2-5-2 2z" fill="#111" /></svg>?
          </button>
          <div className="ml-auto flex gap-[7px] self-start pt-1">
            {["M4 9.500h6", "M3.500 6.500h5v4h-5zM6 6V3.500h5v5H9", "M4 4l6 6M10 4l-6 6"].map((d, i) => (
              <button key={d} aria-label={["最小化视口", "还原视口", "关闭视口"][i]} className="bg-[#fbfbfb]">
                <svg viewBox="0 0 14 14" className="size-[14px]" fill="none"><path d={d} stroke="#666" strokeWidth="1.600" /></svg>
              </button>
            ))}
          </div>
        </nav>

        <div className="flex h-7 shrink-0 items-center border-t border-[#a8a8a8] bg-[#efefef]">
          <div className="flex h-full shrink-0 items-center border-b border-[#a8a8a8] bg-linear-to-b from-[#fdfdfd] to-[#ececec]">
            <Group><Toolset names={["new", "open", "save", "print", "dbin", "dbout"]} /></Group>
            <Group><Toolset names={["pan", "rotate", "zoom", "boxzoom", "fit", "updown"]} /></Group>
            <Group><Toolset names={["ladder", "persp"]} /></Group>
            <Group>
              <Tool name="cursor" on />
              <Combo label="选择类型" value="全部" className="h-[25px] w-[72px]" />
              <span className="flex w-[27px] items-center border-r border-[#bbb]"><Ico size="size-[22px]">{tools.overlap}</Ico></span>
              <Toolset names={["boxes", "selrect", "nodes"]} />
              <Tool name="solidsel" on />
            </Group>
            <Group>
              <button className="relative flex h-[26px] w-[47px] items-center justify-center">
                <Ico size="size-[22px]">{tools.wire}</Ico>
                <span className="absolute top-[5px] left-px whitespace-nowrap">格式:%s</span>
              </button>
              <Toolset names={["hidden", "shaded"]} />
            </Group>
            <Group><Toolset names={["mesh", "mesh2", "mesh3"]} /></Group>
            <Group><Tool name="info" /></Group>
            <Group><Toolset names={["circ1", "circ2", "circ3", "swap", "undo", "redo", "parts", "manager"]} /></Group>
            <Group>
              <Tool name="palette" />
              <Combo label="颜色映射" value="装配件默认值" className="h-[25px] w-[138px]" />
              <Tool name="tan" />
              <button aria-label="更多" className="flex w-[13px] justify-center">
                <svg viewBox="0 0 8 4" className="h-1 w-2"><path d="M0 0h8L4 4z" fill="#111" /></svg>
              </button>
            </Group>
            <Group><Toolset names={["section", "manager"]} /></Group>
          </div>
        </div>

        <div className="flex min-h-0 flex-1">
          <div className="flex w-[154px] shrink-0 flex-col bg-[#fcfcfc] pt-2">
            <div className="ml-[3px] flex items-end">
              <button className="h-[25px] w-[41px] border border-b-0 border-[#d0d0d0] bg-[#fefefe]">模型</button>
              <button className="h-6 w-[39px] border border-l-0 border-[#d0d0d0] bg-[#f0f0f0]">结果</button>
            </div>
            <div className="mr-[5px] ml-[3px] flex min-h-0 flex-1 flex-col border-l border-[#ccc] pl-px">
              <div className="flex h-8 items-center border-t border-[#d0d0d0]">
                <div className="flex h-[22px] w-[47px] shrink-0 items-center border border-[#999]">
                  <Ico size="size-[18px]" box="0 0 18 18">
                    <g fill="#f0cc40" stroke="#222">
                      <path d="M3 11v3c0 3 13 3 13 0v-3z" /><path d="M2 7v3c0 3 13 3 13 0V7z" /><path d="M3 3v3c0 3 13 3 13 0V3z" />
                      <ellipse cx="9.500" cy="3" rx="6.500" ry="2" fill="#f8e48c" />
                    </g>
                  </Ico>
                  <span className="ml-[3px] w-3 shrink-0">模</span>
                  <span className="flex h-full flex-1 items-center justify-center border border-[#aaa] bg-[#dedede]"><Chevron /></span>
                </div>
                <div className="flex flex-1 items-center justify-between pr-[3px] pl-[6px]">
                  <Ico size="h-4 w-[10px]" box="0 0 10 16"><path d="M0 6l5-5 5 5zM0 10l5 5 5-5z" fill="#999" /></Ico>
                  <Ico size="size-4" box="0 0 16 16"><path d="M.5 3.500h5l1-2h4v2h5v10H.5zM6 11.500h5M6.500 12V6.500M4 8.500l2.500-2 2.500 2" stroke="#999" /></Ico>
                  <Ico size="size-4" box="0 0 16 16"><path d="M1.500 1.500h4v3h-4zM6.500 6.500h4v3h-4zM11.500 10.500h4v3h-4zM3.500 5v7.500H11M8 4.500h3M12.500 8v2" stroke="#999" /></Ico>
                  <Ico size="size-4" box="0 0 16 16">
                    <path d="M8 0v2M1 2l2 2M15 2l-2 2M0 8h2M14 8h2M2 13l1-1M14 13l-1-1" stroke="#a88a10" />
                    <circle cx="8" cy="7" r="4" fill="#fbf0a0" stroke="#6a5a10" /><path d="M6 12h4M6 14h4" stroke="#444" strokeWidth="1.500" />
                  </Ico>
                </div>
              </div>
              <ModelTree />
              <div className="h-[6px] border-b border-[#ddd]" />
            </div>
          </div>

          <div className="flex min-w-0 flex-1 flex-col">
            <div className="flex h-[33px] shrink-0 items-center bg-linear-to-b from-[#fcfcfc] to-[#ebebeb] pl-2">
              <span className="w-8 whitespace-nowrap">模块:</span>
              <Combo label="模块" value="分析步" className="mr-[14px] h-6 w-[97px]" spin />
              <span className="w-8 whitespace-nowrap">模型:</span>
              <Combo label="模型" value="Model-1" className="mr-[14px] h-6 w-[97px]" spin muted />
              <span className="w-11 whitespace-nowrap">分析步:</span>
              <Combo label="分析步" value="load" className="h-6 w-[97px]" spin />
            </div>
            <div className="flex min-h-0 flex-1">
              <Toolbox />
              <Viewport />
              <div className="w-px bg-[#cfd4da]" />
            </div>
            <div className="flex h-[38px] shrink-0 items-center justify-end gap-1 bg-linear-to-b from-[#fdfdfd] to-[#ececec] pr-1">
              <svg viewBox="0 0 22 24" className="h-6 w-[22px]" fill="none" aria-hidden="true">
                <path d="M9 2c7-1 8 3 0 7M7 10c6 0 4 7-6 12 3-4 5-8 6-12zM21 9c-9 0-9 2-5 5s1 6-5 6" stroke="#149a90" strokeWidth="1.600" />
              </svg>
              <span className="font-['DejaVu_Sans'] text-base leading-5 font-bold text-[#149a90] italic">SIMULIA</span>
            </div>
          </div>
        </div>

        <div className="flex h-[51px] shrink-0 bg-[#f0f0f0]">
          <div className="flex w-[41px] shrink-0 flex-col border-r border-[#ddd] pl-[3px]">
            <button aria-label="消息区" className="flex h-[37px] shrink-0 items-center justify-center bg-[#fcfcfc]">
              <Ico size="size-6">
                <path d="M4.500 2.500h16v17h-16z" fill="#eceadc" stroke="#222" /><path d="M2 21l7-7 3 3-6 5z" fill="#c8b040" stroke="#333" />
              </Ico>
            </button>
            <button aria-label="命令行" className="mt-1 flex justify-center overflow-hidden">
              <Ico size="size-6">
                <path d="M1 2h22v20H1z" fill="#f4e66c" stroke="#222" strokeWidth="1.500" /><path d="M6 8h2M11 8h2M16 8h2" stroke="#222" strokeWidth="2" />
              </Ico>
            </button>
          </div>
          <div className="min-w-0 flex-1 border border-b-0 border-[#999] bg-[#fdfdfd] pt-[3px] pl-1 font-['Liberation_Mono','Noto_Sans_CJK_SC',monospace] text-sm leading-[13px]">
            <p>新的模型数据库已创建.</p>
            <p>模型 "Model-1" 已创建.</p>
            <p>集 'soil' 已创建 (1 面).</p>
          </div>
          <div className="flex w-[19px] shrink-0 items-end justify-end">
            <Ico size="size-2" box="0 0 8 8"><path d="M6 1h1M2 6h1M6 6h1" stroke="#888" strokeWidth="2" /></Ico>
          </div>
        </div>
      </div>
      <StepDialog />
    </div>
  );
}
